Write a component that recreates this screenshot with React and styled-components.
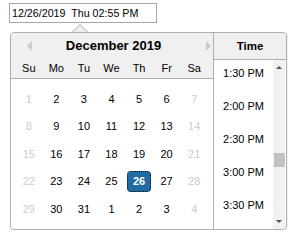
import styled, { createGlobalStyle } from "styled-components";

const GlobalStyle = createGlobalStyle`
  body {
    margin: 0;
    background: #fff;
    font-family: "Liberation Sans", Arial, sans-serif;
  }
`;

const Page = styled.div`
  padding: 3px 0 0 9px;
`;

const DateInput = styled.input`
  display: block;
  box-sizing: border-box;
  width: 148px;
  height: 20px;
  margin: 0;
  padding: 0 0 0 2px;
  border: 1px solid #a6a6a6;
  border-radius: 0;
  font-family: "Liberation Sans", Arial, sans-serif;
  font-size: 10.7px;
  color: #000;
  outline: none;
`;

const Popup = styled.div`
  position: relative;
  box-sizing: border-box;
  display: flex;
  width: 277px;
  height: 198px;
  margin: 9px 0 0 1px;
  border: 1px solid #aeaeae;
  border-radius: 4px;
  background: #fff;
  box-shadow: 1px 1px 1px rgba(0, 0, 0, 0.06);
`;

const Triangle = styled.div`
  position: absolute;
  top: -9px;
  left: 61px;
  width: 0;
  height: 0;
  border: 8px solid transparent;
  border-top: none;
  border-bottom-color: #aeaeae;
  &::after {
    content: "";
    position: absolute;
    top: 1px;
    left: -7px;
    border: 7px solid transparent;
    border-top: none;
    border-bottom-color: #f0f0f0;
  }
`;

const Month = styled.div`
  width: 202px;
  display: flex;
  flex-direction: column;
`;

const MonthHeader = styled.div`
  background: #f0f0f0;
  border-bottom: 1px solid #aeaeae;
  border-top-left-radius: 4px;
  height: 45px;
  display: flex;
  flex-direction: column;
`;

const TitleRow = styled.div`
  position: relative;
  height: 25px;
  display: flex;
  align-items: center;
  justify-content: center;
  padding-left: 3px;
  font-size: 13px;
  font-weight: bold;
  color: #000;
`;

const NavArrow = styled.span`
  position: absolute;
  top: 8px;
  ${(p) => (p.$dir === "left" ? "left: 16px;" : "right: 2px;")}
  width: 0;
  height: 0;
  border-top: 5px solid transparent;
  border-bottom: 5px solid transparent;
  ${(p) =>
    p.$dir === "left"
      ? "border-right: 5px solid #ccc;"
      : "border-left: 5px solid #ccc;"}
`;

const WeekGrid = styled.div`
  display: grid;
  grid-template-columns: repeat(7, 1fr);
  padding: 0 5px 0 4px;
`;

const DayName = styled.div`
  height: 20px;
  display: flex;
  align-items: center;
  justify-content: center;
  font-size: 11px;
  color: #000;
`;

const DaysGrid = styled(WeekGrid)`
  grid-auto-rows: 27.5px;
  padding-top: 6px;
`;

const Day = styled.div`
  display: flex;
  align-items: center;
  justify-content: center;
  font-size: 11px;
  color: ${(p) => (p.$outside ? "#ccc" : "#000")};
`;

const Selected = styled.span`
  box-sizing: border-box;
  width: 24px;
  height: 21px;
  display: flex;
  align-items: center;
  justify-content: center;
  border-radius: 4px;
  background: #216ba5;
  color: #fff;
  font-weight: bold;
  border: 1px dotted #111;
`;

const TimeColumn = styled.div`
  flex: 1;
  display: flex;
  flex-direction: column;
  border-left: 1px solid #aeaeae;
  min-height: 0;
`;

const TimeHeader = styled.div`
  height: 26px;
  display: flex;
  align-items: center;
  justify-content: center;
  background: #f0f0f0;
  border-bottom: 1px solid #aeaeae;
  border-top-right-radius: 4px;
  font-size: 11.5px;
  font-weight: bold;
  color: #000;
`;

const TimeBody = styled.div`
  flex: 1;
  display: flex;
  overflow: hidden;
  min-height: 0;
`;

const TimeList = styled.div`
  flex: 1;
  overflow: hidden;
`;

const TimeItems = styled.div`
  margin-top: -4px;
`;

const TimeItem = styled.div`
  height: 33px;
  display: flex;
  align-items: center;
  justify-content: center;
  font-size: 11px;
  color: #000;
`;

const Scrollbar = styled.div`
  width: 12px;
  margin-right: 1px;
  background: #f1f1f1;
  display: flex;
  flex-direction: column;
  align-items: center;
`;

const ScrollArrow = styled.span`
  width: 0;
  height: 0;
  margin: ${(p) => (p.$up ? "6px 0 0" : "auto 0 6px")};
  border-left: 3px solid transparent;
  border-right: 3px solid transparent;
  ${(p) =>
    p.$up ? "border-bottom: 3px solid #505050;" : "border-top: 3px solid #505050;"}
`;

const Thumb = styled.span`
  width: 11px;
  height: 14px;
  margin-top: 84px;
  background: #c1c1c1;
`;

const dayNames = ["Su", "Mo", "Tu", "We", "Th", "Fr", "Sa"];

const weeks = [
  [1, 2, 3, 4, 5, 6, 7],
  [8, 9, 10, 11, 12, 13, 14],
  [15, 16, 17, 18, 19, 20, 21],
  [22, 23, 24, 25, 26, 27, 28],
  [29, 30, 31, 1, 2, 3, 4],
];

const times = ["1:30 PM", "2:00 PM", "2:30 PM", "3:00 PM", "3:30 PM"];

export default function App() {
  return (
    <>
      <GlobalStyle />
      <Page>
        <DateInput readOnly value="12/26/2019  Thu 02:55 PM" />
        <Popup>
          <Triangle />
          <Month>
            <MonthHeader>
              <TitleRow>
                <NavArrow $dir="left" />
                December 2019
                <NavArrow $dir="right" />
              </TitleRow>
              <WeekGrid>
                {dayNames.map((d) => (
                  <DayName key={d}>{d}</DayName>
                ))}
              </WeekGrid>
            </MonthHeader>
            <DaysGrid>
              {weeks.map((week, wi) =>
                week.map((d, di) => {
                  const key = `${wi}-${di}`;
                  if (wi === 3 && d === 26) {
                    return (
                      <Day key={key}>
                        <Selected>26</Selected>
                      </Day>
                    );
                  }
                  return (
                    <Day key={key} $outside={di === 0 || di === 6}>
                      {d}
                    </Day>
                  );
                })
              )}
            </DaysGrid>
          </Month>
          <TimeColumn>
            <TimeHeader>Time</TimeHeader>
            <TimeBody>
              <TimeList>
                <TimeItems>
                  {times.map((t) => (
                    <TimeItem key={t}>{t}</TimeItem>
                  ))}
                </TimeItems>
              </TimeList>
              <Scrollbar>
                <ScrollArrow $up />
                <Thumb />
                <ScrollArrow />
              </Scrollbar>
            </TimeBody>
          </TimeColumn>
        </Popup>
      </Page>
    </>
  );
}
